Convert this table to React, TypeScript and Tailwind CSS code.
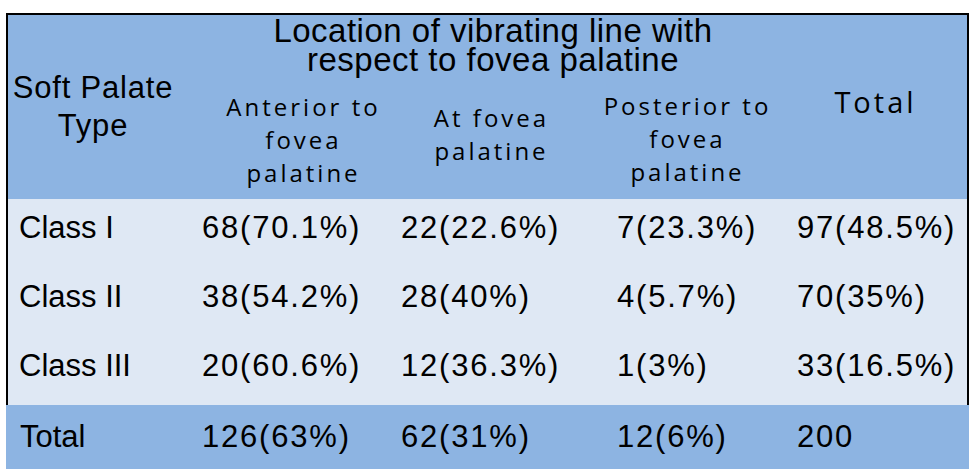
import React from 'react';

const rows = [
  { type: 'Class I', cells: ['68(70.1%)', '22(22.6%)', '7(23.3%)', '97(48.5%)'] },
  { type: 'Class II', cells: ['38(54.2%)', '28(40%)', '4(5.7%)', '70(35%)'] },
  { type: 'Class III', cells: ['20(60.6%)', '12(36.3%)', '1(3%)', '33(16.5%)'] },
];

const totals = ['126(63%)', '62(31%)', '12(6%)', '200'];

function DataRow({ label, cells, height }: { label: string; cells: string[]; height: string }) {
  return (
    <div className={`grid grid-cols-[182px_199px_216px_180px_1fr] ${height}`}>
      <div className="pl-[11px] pt-[11px] leading-[36px]">{label}</div>
      {cells.map((c, i) => (
        <div key={i} className="pl-3 pt-[11px] leading-[36px] tracking-[1.8px]">
          {c}
        </div>
      ))}
    </div>
  );
}

export default function App() {
  return (
    <div className="min-h-[469px] bg-white pt-[13px] pl-[6px] font-['Liberation_Sans',Arial,sans-serif] text-black">
      <div className="w-[963px]">
        <div className="border-x-2 border-t-2 border-black">
          {/* header */}
          <div className="flex h-[184px] bg-[#8db4e2]">
            <div className="w-[170px] pt-[54px] text-center text-[31px] leading-[38px] tracking-[0.8px]">
              Soft Palate
              <br />
              Type
            </div>
            <div className="w-[640px]">
              <div className="pr-[10px] pt-[1px] text-center text-[33px] leading-[29px] tracking-[0.5px]">
                Location of vibrating line with
                <br />
                respect to fovea palatine
              </div>
              <div className="flex font-['Open_Sans',sans-serif] text-[24px] leading-[33px] tracking-[3px]">
                <div className="mt-[16px] w-[248px] pl-[3px] text-center">
                  Anterior to
                  <br />
                  fovea
                  <br />
                  palatine
                </div>
                <div className="mt-[27px] w-[128px] pl-[3px] text-center">
                  At fovea
                  <br />
                  palatine
                </div>
                <div className="mt-[15px] w-[264px] pl-[3px] text-center">
                  Posterior to
                  <br />
                  fovea
                  <br />
                  palatine
                </div>
              </div>
            </div>
            <div className="w-[112px] pl-[3px] pt-[69px] text-center font-['Open_Sans',sans-serif] text-[29px] leading-[36px] tracking-[3px]">
              Total
            </div>
          </div>

          {/* body */}
          <div className="bg-[#dfe8f4] text-[31px]">
            <DataRow label={rows[0].type} cells={rows[0].cells} height="h-[69px]" />
            <DataRow label={rows[1].type} cells={rows[1].cells} height="h-[69px]" />
            <DataRow label={rows[2].type} cells={rows[2].cells} height="h-[68px]" />
          </div>
        </div>

        {/* total row */}
        <div className="h-[64px] bg-[#8db4e2] px-[2px] text-[31px]">
          <div className="grid grid-cols-[182px_199px_216px_180px_1fr]">
            <div className="pl-3 pt-[14px] leading-[36px]">Total</div>
            {totals.map((t, i) => (
              <div key={i} className="pl-3 pt-[14px] leading-[36px] tracking-[1.8px]">
                {t}
              </div>
            ))}
          </div>
        </div>
      </div>
    </div>
  );
}
